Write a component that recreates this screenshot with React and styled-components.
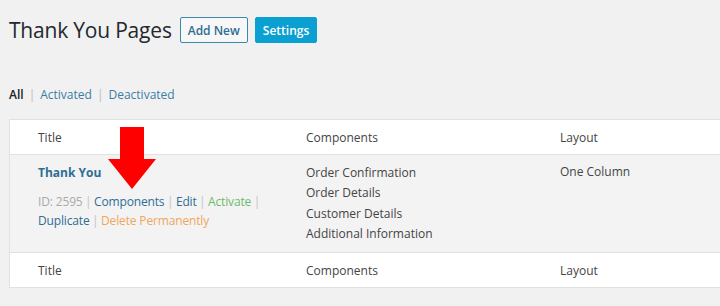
import styled, { createGlobalStyle } from "styled-components";

const GlobalStyle = createGlobalStyle`
  body {
    margin: 0;
    background: #f1f1f1;
    font-family: "Open Sans", "Noto Sans", sans-serif;
    color: #444;
  }
`;

const Wrap = styled.div`
  padding: 17px 0 0 9px;
  width: 711px;
  height: 289px;
  overflow: hidden;
`;

const HeadRow = styled.div`
  display: flex;
  align-items: center;
  height: 26px;
`;

const PageTitle = styled.h1`
  margin: 0 8px 0 0;
  font-size: 21px;
  font-weight: 400;
  color: #23282d;
  letter-spacing: -0.2px;
`;

const Button = styled.button`
  height: 26px;
  padding: 0 7px;
  margin-right: 7px;
  font-family: inherit;
  font-size: 12px;
  font-weight: 600;
  border-radius: 2px;
  border: 1px solid ${(p) => (p.$primary ? "#0ba0d2" : "#3d88ad")};
  background: ${(p) => (p.$primary ? "#0ba0d2" : "#f7f7f7")};
  color: ${(p) => (p.$primary ? "#fff" : "#2e6e93")};
`;

const Filters = styled.div`
  margin-top: 43px;
  font-size: 12px;
  color: #bbb;
  display: flex;
  gap: 5px;
`;

const FilterLink = styled.span`
  color: ${(p) => (p.$current ? "#222" : "#3a7ea6")};
  font-weight: ${(p) => (p.$current ? 600 : 400)};
`;

const Table = styled.div`
  margin-top: 16px;
  border: 1px solid #e1e1e1;
  border-right: none;
  background: #fff;
  position: relative;
  font-size: 12px;
  color: #444;
`;

const Row = styled.div`
  display: grid;
  grid-template-columns: 268px 254px 1fr;
  padding-left: 28px;
  height: ${(p) => p.$h}px;
  align-items: ${(p) => (p.$top ? "start" : "center")};
  background: ${(p) => (p.$alt ? "#f3f3f3" : "#fff")};
  border-top: ${(p) => (p.$line ? "1px solid #e1e1e1" : "none")};
  box-sizing: border-box;
  padding-top: ${(p) => (p.$top ? 8 : 0)}px;
`;

const RowTitle = styled.div`
  color: #2e6e93;
  font-weight: 700;
  font-size: 12px;
  line-height: 20px;
`;

const Actions = styled.div`
  margin-top: 9px;
  line-height: 19px;
  color: #aaa;
  white-space: nowrap;
  letter-spacing: -0.15px;
`;

const Act = styled.span`
  color: ${(p) => p.$c};
`;

const Sep = styled.span`
  color: #c4c4c4;
  margin: 0 2.5px;
`;

const List = styled.div`
  line-height: 20.3px;
`;

const LayoutCell = styled.div`
  line-height: 18px;
`;

const Arrow = styled.svg`
  position: absolute;
  left: 98px;
  top: 7px;
`;

export default function App() {
  return (
    <>
      <GlobalStyle />
      <Wrap>
        <HeadRow>
          <PageTitle>Thank You Pages</PageTitle>
          <Button>Add New</Button>
          <Button $primary>Settings</Button>
        </HeadRow>
        <Filters>
          <FilterLink $current>All</FilterLink>|
          <FilterLink>Activated</FilterLink>|
          <FilterLink>Deactivated</FilterLink>
        </Filters>
        <Table>
          <Row $h={34}>
            <div>Title</div>
            <div>Components</div>
            <div>Layout</div>
          </Row>
          <Row $h={98} $alt $line $top>
            <div>
              <RowTitle>Thank You</RowTitle>
              <Actions>
                ID: 2595<Sep>|</Sep>
                <Act $c="#2e6e93">Components</Act>
                <Sep>|</Sep>
                <Act $c="#2e6e93">Edit</Act>
                <Sep>|</Sep>
                <Act $c="#6cbb6c">Activate</Act>
                <Sep>|</Sep>
                <br />
                <Act $c="#2e6e93">Duplicate</Act>
                <Sep>|</Sep>
                <Act $c="#f1a65e">Delete Permanently</Act>
              </Actions>
            </div>
            <List>
              <div>Order Confirmation</div>
              <div>Order Details</div>
              <div>Customer Details</div>
              <div>Additional Information</div>
            </List>
            <LayoutCell>One Column</LayoutCell>
          </Row>
          <Row $h={35} $line>
            <div>Title</div>
            <div>Components</div>
            <div>Layout</div>
          </Row>
          <Arrow width="50" height="64" viewBox="0 0 50 64">
            <polygon points="12,0 36,0 36,32 48,32 24,62 0,32 12,32" fill="#f00" />
          </Arrow>
        </Table>
      </Wrap>
    </>
  );
}
